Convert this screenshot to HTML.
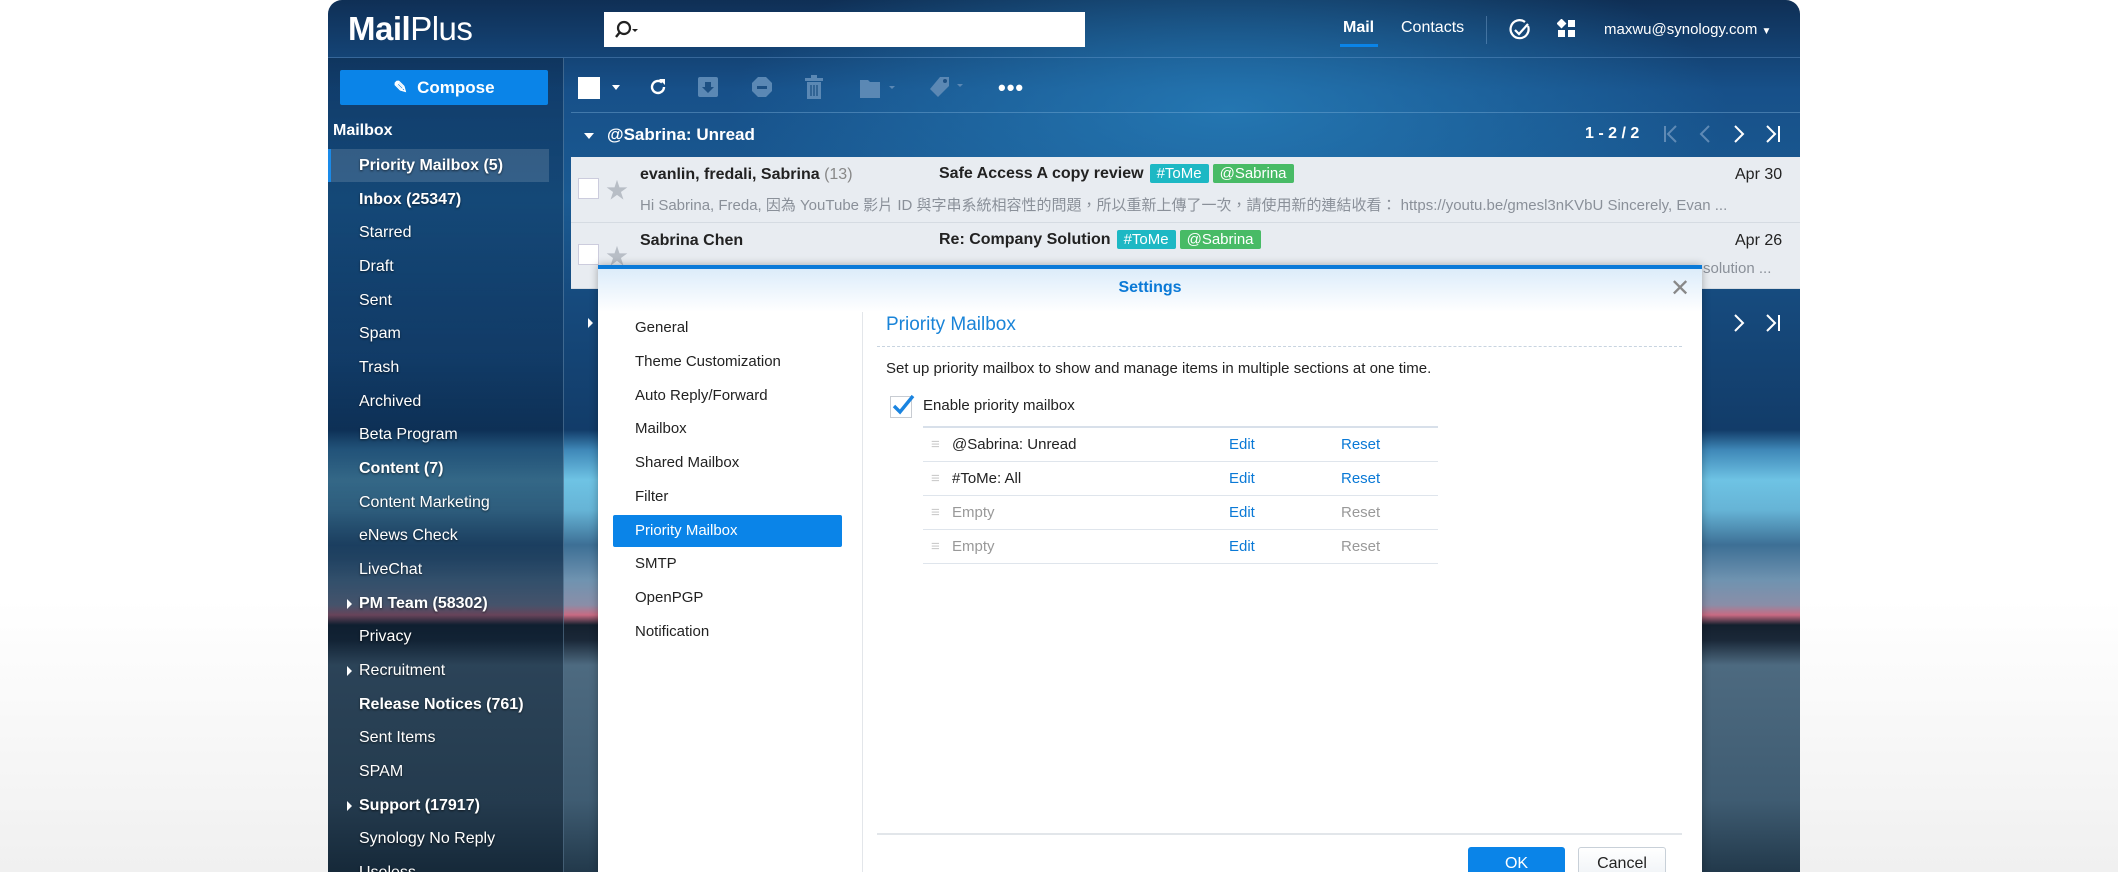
<!DOCTYPE html>
<html><head><meta charset="utf-8">
<style>
*{box-sizing:border-box;margin:0;padding:0}
body{width:2118px;height:872px;overflow:hidden;background:linear-gradient(180deg,#fff 0,#fff 600px,#f0f0f0 872px);font-family:"Liberation Sans","Noto Sans CJK TC",sans-serif;position:relative}
.win{position:absolute;left:328px;top:0;width:1472px;height:872px;border-radius:14px 14px 0 0;overflow:hidden;
background:
radial-gradient(ellipse 500px 180px at 900px 110px,rgba(40,130,190,.75),rgba(40,130,190,0) 100%),
linear-gradient(180deg,#0f2f55 0,#175089 90px,#1a5a92 200px,#164a7d 300px,#123c69 430px,#3f88b8 450px,#6ec3e4 480px,#66b4d6 510px,#3d6f95 545px,#6f93b0 580px,#8a8ea8 605px,#c86a82 615px,#14202e 625px,#1a2838 640px,#4d6a80 665px,#3f5c72 800px,#22394b 872px)}
.abs{position:absolute}
.hdr{left:0;top:0;width:1472px;height:58px;border-bottom:1px solid rgba(120,170,220,.35)}
.logo{left:20px;top:10px;font-size:33px;color:#fff;letter-spacing:-0.5px}
.search{left:276px;top:12px;width:481px;height:35px;background:#fff}
.nav{color:#fff;font-size:16px;top:19px}
.side{left:0;top:58px;width:236px;height:814px;background:linear-gradient(180deg,rgba(5,25,50,.35),rgba(5,25,50,.2) 300px,rgba(8,35,65,.55) 400px,rgba(8,35,65,.65) 500px,rgba(10,30,50,.5) 560px,rgba(10,25,40,.5));border-right:1px solid rgba(150,190,220,.35)}
.compose{left:12px;top:70px;width:208px;height:35px;background:#0a84e8;border-radius:2px;color:#fff;font-weight:bold;font-size:17px;text-align:center;line-height:35px}
.si{position:absolute;left:31px;color:#fff;font-size:16px;text-shadow:0 1px 2px rgba(0,0,0,.6);white-space:nowrap}
.si.b{font-weight:bold}
.tri{position:absolute;left:-12px;top:4px;border-left:5px solid #fff;border-top:5px solid transparent;border-bottom:5px solid transparent}
.tb{top:112px;left:243px;width:1229px;height:1px;background:rgba(130,180,220,.4)}
.list{left:243px;top:157px;width:1229px;height:132px;background:#e8ecf1}
.row{position:absolute;left:0;width:1229px;height:66px;border-bottom:1px solid #d5dbe2}
.cb{position:absolute;width:21px;height:21px;background:#fff;border:1px solid #ccd;}
.star{position:absolute;color:#b8bec6;font-size:22px}
.tag{display:inline-block;color:#fff;font-size:15px;padding:1px 7px;border-radius:2px;margin-left:6px;font-weight:normal}
.dlg{left:270px;top:265px;width:1104px;height:607px;background:#fff;border-top:4px solid #0a7ad8;box-shadow:0 0 8px rgba(0,0,0,.3)}
.dt{left:0;top:0;width:1104px;height:43px;background:linear-gradient(180deg,#dcecfa,#fff);text-align:center;color:#0a79d6;font-weight:bold;font-size:16px;line-height:38px}
.ln{position:absolute;left:37px;font-size:15px;color:#222}
.tr{position:absolute;left:0;width:515px;height:34px;border-bottom:1px solid #dfe5ec;font-size:15px;line-height:33px}
.tr span{position:absolute}
.blue{color:#0a79d6}
</style></head><body>
<div class="win">
 <div class="abs hdr"></div>
 <div class="abs logo"><b style="font-weight:bold">Mail</b><span style="font-weight:normal">Plus</span></div>
 <div class="abs search"><svg width="30" height="30" style="position:absolute;left:8px;top:4px" viewBox="0 0 30 30"><circle cx="12" cy="12" r="6" fill="none" stroke="#222" stroke-width="2.2"/><path d="M8 16l-4 5" stroke="#222" stroke-width="2.4"/><path d="M20 13l3 3 3-3z" fill="#222"/></svg></div>
 <div class="abs nav" style="left:1015px;font-weight:bold">Mail</div>
 <div class="abs" style="left:1012px;top:44px;width:38px;height:3px;background:#0a84e8"></div>
 <div class="abs nav" style="left:1073px">Contacts</div>
 <div class="abs" style="left:1158px;top:16px;width:1px;height:28px;background:rgba(150,190,230,.35)"></div>
 <svg class="abs" style="left:1180px;top:18px" width="24" height="24" viewBox="0 0 24 24"><path d="M20 8A9 9 0 1 1 17 4" fill="none" stroke="#fff" stroke-width="2.2"/><path d="M7 12l4 4 9-10" fill="none" stroke="#fff" stroke-width="2.2"/></svg>
 <svg class="abs" style="left:1229px;top:19px" width="20" height="20" viewBox="0 0 20 20" fill="#fff"><rect x="1" y="1" width="7" height="7" transform="rotate(45 4.5 4.5)"/><rect x="11" y="1" width="7" height="7"/><rect x="1" y="11" width="7" height="7"/><rect x="11" y="11" width="7" height="7"/></svg>
 <div class="abs nav" style="left:1276px;top:21px;font-size:15px">maxwu@synology.com <span style="font-size:10px">▼</span></div>

 <div class="abs side"></div>
 <div class="abs compose">✎ &nbsp;Compose</div>
 <div class="abs" style="left:5px;top:122px;color:#fff;font-weight:bold;font-size:16px">Mailbox</div>
 <div class="abs" style="left:0;top:149px;width:221px;height:33px;background:rgba(255,255,255,.14);border-left:3px solid #1a8ae8"></div>
 <div class="abs" style="left:0;top:157px;width:236px;height:700px">
  <div class="si b" style="top:0">Priority Mailbox (5)</div>
  <div class="si b" style="top:34px">Inbox (25347)</div>
  <div class="si" style="top:67px">Starred</div>
  <div class="si" style="top:101px">Draft</div>
  <div class="si" style="top:135px">Sent</div>
  <div class="si" style="top:168px">Spam</div>
  <div class="si" style="top:202px">Trash</div>
  <div class="si" style="top:236px">Archived</div>
  <div class="si" style="top:269px">Beta Program</div>
  <div class="si b" style="top:303px">Content (7)</div>
  <div class="si" style="top:337px">Content Marketing</div>
  <div class="si" style="top:370px">eNews Check</div>
  <div class="si" style="top:404px">LiveChat</div>
  <div class="si b" style="top:438px"><i class="tri"></i>PM Team (58302)</div>
  <div class="si" style="top:471px">Privacy</div>
  <div class="si" style="top:505px"><i class="tri"></i>Recruitment</div>
  <div class="si b" style="top:539px">Release Notices (761)</div>
  <div class="si" style="top:572px">Sent Items</div>
  <div class="si" style="top:606px">SPAM</div>
  <div class="si b" style="top:640px"><i class="tri"></i>Support (17917)</div>
  <div class="si" style="top:673px">Synology No Reply</div>
  <div class="si" style="top:707px">Useless</div>
 </div>

 <!-- toolbar -->
 <div class="abs" style="left:250px;top:77px;width:22px;height:22px;background:#fff"></div>
 <div class="abs" style="left:284px;top:85px;border-top:5px solid #fff;border-left:4px solid transparent;border-right:4px solid transparent"></div>
 <svg class="abs" style="left:319px;top:76px" width="22" height="22" viewBox="0 0 22 22"><path d="M17 11a6 6 0 1 1-2-4.5" fill="none" stroke="#fff" stroke-width="2.4"/><path d="M12 3h6v6z" fill="#fff"/></svg>
 <svg class="abs" style="left:369px;top:76px" width="22" height="22" viewBox="0 0 22 22"><rect x="1" y="1" width="20" height="20" rx="2" fill="#5b88b4"/><path d="M8 6h6v5h3l-6 6-6-6h3z" fill="#1d5083"/></svg>
 <svg class="abs" style="left:423px;top:76px" width="22" height="22" viewBox="0 0 22 22"><path d="M7 1h8l6 6v8l-6 6H7l-6-6V7z" fill="#5b88b4"/><rect x="6" y="10" width="10" height="3" fill="#1d5083"/></svg>
 <svg class="abs" style="left:476px;top:75px" width="20" height="24" viewBox="0 0 20 24"><rect x="1" y="3" width="18" height="3" fill="#5b88b4"/><rect x="7" y="0" width="6" height="3" fill="#5b88b4"/><path d="M3 7h14v17H3z" fill="#5b88b4"/><path d="M7 10v11M10 10v11M13 10v11" stroke="#1d5083" stroke-width="1.3"/></svg>
 <svg class="abs" style="left:532px;top:78px" width="40" height="20" viewBox="0 0 40 20"><path d="M0 2h8l2 2h10v16H0z" fill="#5b88b4"/><path d="M29 8l3 3 3-3z" fill="#5b88b4"/></svg>
 <svg class="abs" style="left:602px;top:76px" width="40" height="24" viewBox="0 0 40 24"><path d="M10 1h9v9L8 21 0 13z" fill="#5b88b4"/><circle cx="15" cy="5" r="2" fill="#1d5083"/><path d="M27 8l3 3 3-3z" fill="#5b88b4"/></svg>
 <div class="abs" style="left:670px;top:75px;color:#fff;font-size:22px;letter-spacing:1px;font-weight:bold">•••</div>
 <div class="abs tb"></div>

 <!-- section header -->
 <div class="abs" style="left:256px;top:133px;border-top:6px solid #fff;border-left:5px solid transparent;border-right:5px solid transparent"></div>
 <div class="abs" style="left:279px;top:125px;color:#fff;font-weight:bold;font-size:17px">@Sabrina: Unread</div>
 <div class="abs" style="left:1257px;top:125px;color:#fff;font-weight:bold;font-size:16px">1 - 2 / 2</div>
 <svg class="abs" style="left:1335px;top:124px" width="130" height="20" viewBox="0 0 130 20" fill="none" stroke-width="2">
  <path d="M2 2v16M13 2l-8 8 8 8" stroke="#5f8ab5"/>
  <path d="M46 2l-8 8 8 8" stroke="#5f8ab5"/>
  <path d="M72 2l8 8-8 8" stroke="#fff"/>
  <path d="M104 2l8 8-8 8M116 2v16" stroke="#fff"/>
 </svg>

 <div class="abs list">
  <div class="row" style="top:0">
   <div class="cb" style="left:7px;top:21px"></div><div class="star" style="left:35px;top:16px">★</div>
   <div class="abs" style="left:69px;top:9px;font-size:16px;font-weight:bold;color:#222">evanlin, fredali, Sabrina <span style="font-weight:normal;color:#888">(13)</span></div>
   <div class="abs" style="left:368px;top:7px;font-size:16px;font-weight:bold;color:#222">Safe Access A copy review<span class="tag" style="background:#1db8c4">#ToMe</span><span class="tag" style="background:#48bb66;margin-left:4px">@Sabrina</span></div>
   <div class="abs" style="left:1164px;top:9px;font-size:16px;color:#222">Apr 30</div>
   <div class="abs" style="left:69px;top:37px;font-size:15px;color:#8a9099;white-space:nowrap">Hi Sabrina, Freda, 因為 YouTube 影片 ID 與字串系統相容性的問題，所以重新上傳了一次，請使用新的連結收看： https://youtu.be/gmesl3nKVbU Sincerely, Evan ...</div>
  </div>
  <div class="row" style="top:66px">
   <div class="cb" style="left:7px;top:21px"></div><div class="star" style="left:35px;top:16px">★</div>
   <div class="abs" style="left:69px;top:9px;font-size:16px;font-weight:bold;color:#222">Sabrina Chen</div>
   <div class="abs" style="left:368px;top:7px;font-size:16px;font-weight:bold;color:#222">Re: Company Solution<span class="tag" style="background:#1db8c4">#ToMe</span><span class="tag" style="background:#48bb66;margin-left:4px">@Sabrina</span></div>
   <div class="abs" style="left:1164px;top:9px;font-size:16px;color:#222">Apr 26</div>
   <div class="abs" style="left:1132px;top:37px;font-size:15px;color:#8a9099">solution ...</div>
  </div>
 </div>
 <div class="abs" style="left:260px;top:318px;border-left:5px solid #fff;border-top:5px solid transparent;border-bottom:5px solid transparent"></div>
 <svg class="abs" style="left:1400px;top:313px" width="60" height="20" viewBox="0 0 60 20" fill="none" stroke="#fff" stroke-width="2">
  <path d="M7 2l8 8-8 8"/><path d="M39 2l8 8-8 8M51 2v16"/>
 </svg>

 <!-- dialog -->
 <div class="abs dlg">
  <div class="abs dt">Settings</div>
  <div class="abs" style="left:1072px;top:5px;color:#888;font-size:24px">✕</div>
  <div class="abs" style="left:264px;top:43px;width:1px;height:564px;background:#e3e6ea"></div>
  <div class="abs" style="left:15px;top:246px;width:229px;height:32px;background:#0a84e8;border-radius:2px"></div>
  <div class="ln" style="top:50px">General</div>
  <div class="ln" style="top:84px">Theme Customization</div>
  <div class="ln" style="top:118px">Auto Reply/Forward</div>
  <div class="ln" style="top:151px">Mailbox</div>
  <div class="ln" style="top:185px">Shared Mailbox</div>
  <div class="ln" style="top:219px">Filter</div>
  <div class="ln" style="top:253px;color:#fff">Priority Mailbox</div>
  <div class="ln" style="top:286px">SMTP</div>
  <div class="ln" style="top:320px">OpenPGP</div>
  <div class="ln" style="top:354px">Notification</div>

  <div class="abs" style="left:288px;top:45px;color:#1a84d8;font-size:19px">Priority Mailbox</div>
  <div class="abs" style="left:279px;top:77px;width:805px;border-top:1px dashed #c8d4e0"></div>
  <div class="abs" style="left:288px;top:91px;font-size:15px;color:#222">Set up priority mailbox to show and manage items in multiple sections at one time.</div>
  <div class="abs" style="left:292px;top:127px;width:22px;height:22px;border:1px solid #c8ccd2"></div>
  <svg class="abs" style="left:292px;top:123px" width="26" height="26" viewBox="0 0 26 26"><path d="M4 14l6 6L23 4" fill="none" stroke="#1a84e0" stroke-width="3.4"/></svg>
  <div class="abs" style="left:325px;top:128px;font-size:15px;color:#222">Enable priority mailbox</div>
  <div class="abs" style="left:325px;top:157px;width:515px;height:137px;border-top:2px solid #d8e0ea">
   <div class="tr" style="top:0"><span style="left:8px;color:#ccc">≡</span><span style="left:29px;color:#222">@Sabrina: Unread</span><span class="blue" style="left:306px">Edit</span><span class="blue" style="left:418px">Reset</span></div>
   <div class="tr" style="top:34px"><span style="left:8px;color:#ccc">≡</span><span style="left:29px;color:#222">#ToMe: All</span><span class="blue" style="left:306px">Edit</span><span class="blue" style="left:418px">Reset</span></div>
   <div class="tr" style="top:68px"><span style="left:8px;color:#ccc">≡</span><span style="left:29px;color:#999">Empty</span><span class="blue" style="left:306px">Edit</span><span style="left:418px;color:#999">Reset</span></div>
   <div class="tr" style="top:102px"><span style="left:8px;color:#ccc">≡</span><span style="left:29px;color:#999">Empty</span><span class="blue" style="left:306px">Edit</span><span style="left:418px;color:#999">Reset</span></div>
  </div>
  <div class="abs" style="left:279px;top:564px;width:805px;height:2px;background:#e2e6ea"></div>
  <div class="abs" style="left:870px;top:578px;width:97px;height:34px;background:#0a84e8;border-radius:3px;color:#fff;font-size:16px;text-align:center;line-height:34px">OK</div>
  <div class="abs" style="left:980px;top:578px;width:88px;height:34px;background:linear-gradient(#fff,#eef2f6);border:1px solid #c8d0d8;border-radius:3px;color:#222;font-size:16px;text-align:center;line-height:32px">Cancel</div>
 </div>
</div>
</body></html>
